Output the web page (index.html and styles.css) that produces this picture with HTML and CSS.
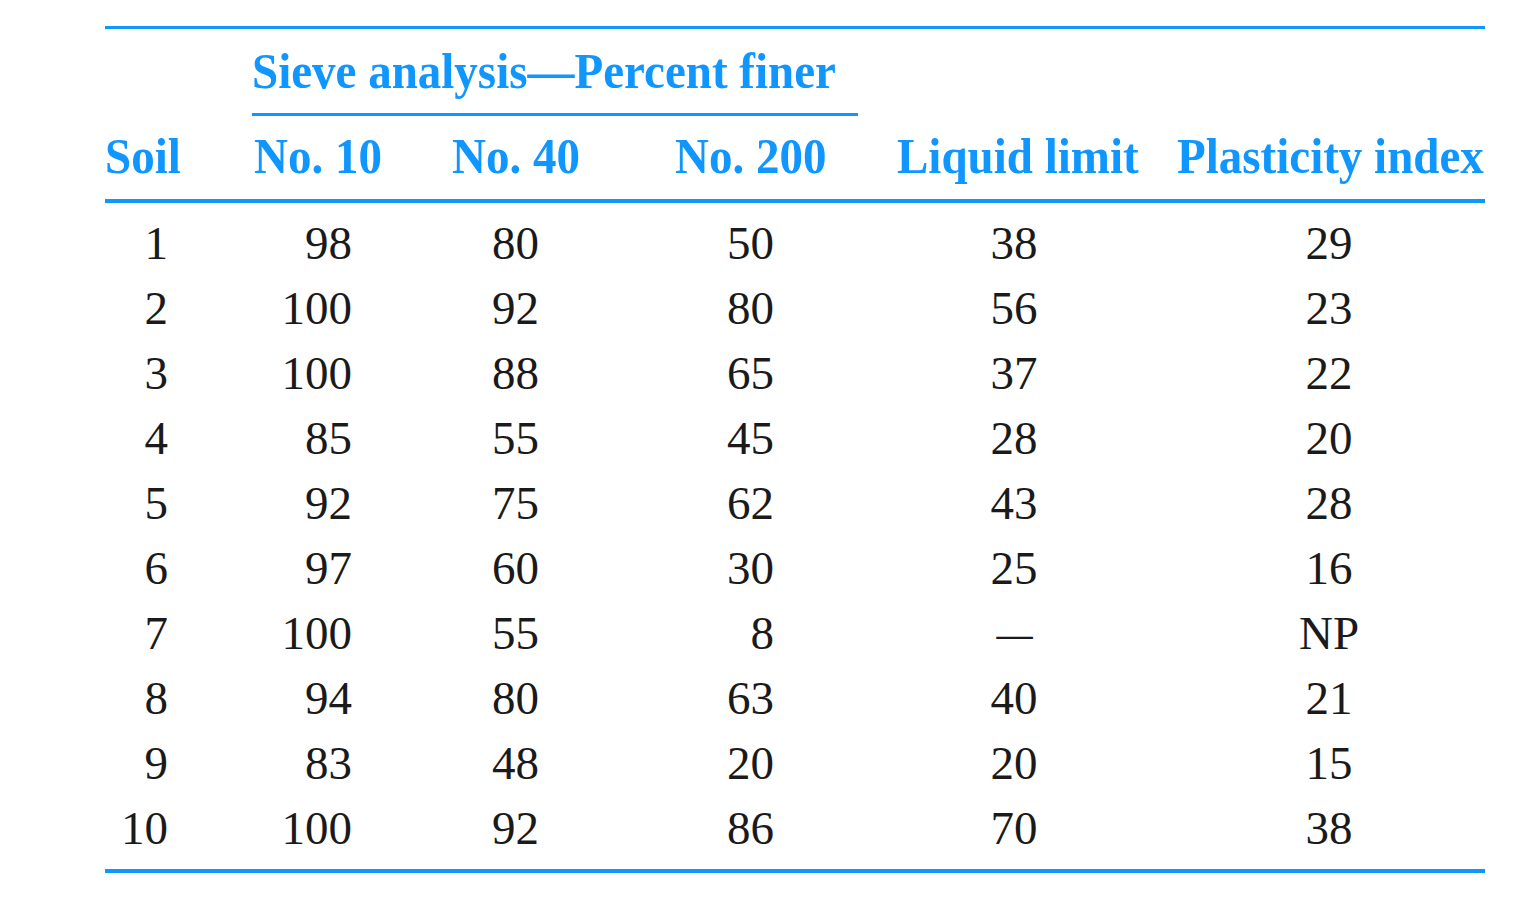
FILE: index.html
```html
<!DOCTYPE html>
<html lang="en">
<head>
<meta charset="utf-8">
<title>Soil data</title>
<link rel="stylesheet" href="styles.css">
</head>
<body>
<div class="tbl">
  <div class="row group-row">
    <div class="group-cell"><span class="hd">Sieve analysis—Percent finer</span></div>
  </div>
  <div class="row head-row">
    <div class="h c1"><span class="hd">Soil</span></div>
    <div class="h c2"><span class="hd">No. 10</span></div>
    <div class="h c3"><span class="hd">No. 40</span></div>
    <div class="h c4"><span class="hd">No. 200</span></div>
    <div class="h c5"><span class="hd">Liquid limit</span></div>
    <div class="h c6"><span class="hd">Plasticity index</span></div>
  </div>
  <div class="body">
    <div class="row drow"><div class="d c1">1</div><div class="d c2">98</div><div class="d c3">80</div><div class="d c4">50</div><div class="d c5">38</div><div class="d c6">29</div></div>
    <div class="row drow"><div class="d c1">2</div><div class="d c2">100</div><div class="d c3">92</div><div class="d c4">80</div><div class="d c5">56</div><div class="d c6">23</div></div>
    <div class="row drow"><div class="d c1">3</div><div class="d c2">100</div><div class="d c3">88</div><div class="d c4">65</div><div class="d c5">37</div><div class="d c6">22</div></div>
    <div class="row drow"><div class="d c1">4</div><div class="d c2">85</div><div class="d c3">55</div><div class="d c4">45</div><div class="d c5">28</div><div class="d c6">20</div></div>
    <div class="row drow"><div class="d c1">5</div><div class="d c2">92</div><div class="d c3">75</div><div class="d c4">62</div><div class="d c5">43</div><div class="d c6">28</div></div>
    <div class="row drow"><div class="d c1">6</div><div class="d c2">97</div><div class="d c3">60</div><div class="d c4">30</div><div class="d c5">25</div><div class="d c6">16</div></div>
    <div class="row drow"><div class="d c1">7</div><div class="d c2">100</div><div class="d c3">55</div><div class="d c4">8</div><div class="d c5"><span class="dash">—</span></div><div class="d c6">NP</div></div>
    <div class="row drow"><div class="d c1">8</div><div class="d c2">94</div><div class="d c3">80</div><div class="d c4">63</div><div class="d c5">40</div><div class="d c6">21</div></div>
    <div class="row drow"><div class="d c1">9</div><div class="d c2">83</div><div class="d c3">48</div><div class="d c4">20</div><div class="d c5">20</div><div class="d c6">15</div></div>
    <div class="row drow"><div class="d c1">10</div><div class="d c2">100</div><div class="d c3">92</div><div class="d c4">86</div><div class="d c5">70</div><div class="d c6">38</div></div>
  </div>
</div>
</body>
</html>
```

FILE: styles.css
```css
html, body {
  margin: 0;
  padding: 0;
  background: #ffffff;
}

body {
  font-family: "Liberation Serif", "Times New Roman", serif;
  font-size: 47px;
  line-height: 47px;
  color: #1a1a1a;
}

.tbl {
  margin: 26px 0 0 105px;
  width: 1380px;
  border-top: 3px solid #1096ff;
  border-bottom: 4px solid #1096ff;
}

.row {
  display: grid;
  grid-template-columns: 145px 190px 200px 240px 280px 325px;
}

.hd {
  display: inline-block;
  font-weight: bold;
  color: #1096ff;
  white-space: nowrap;
  transform: scaleY(1.08);
  transform-origin: 50% 84%;
}

.group-row {
  padding-top: 20px;
}

.group-cell {
  grid-column: 2 / 5;
  margin-left: 2px;
  margin-right: 22px;
  padding-bottom: 17px;
  border-bottom: 3px solid #1096ff;
}

.head-row {
  padding-top: 18px;
  padding-bottom: 18px;
  border-bottom: 4px solid #1096ff;
}

.h.c1 { padding-left: 0; }
.h.c2 { padding-left: 4px; }
.h.c3 { padding-left: 12px; }
.h.c4 { padding-left: 35px; }
.h.c5 { padding-left: 17px; }
.h.c6 { padding-left: 17px; }

.body {
  padding-top: 8px;
  padding-bottom: 8px;
}

.drow {
  line-height: 65px;
}

.d.c1 { text-align: right; padding-right: 82px; }
.d.c2 { text-align: right; padding-right: 88px; }
.d.c3 { text-align: right; padding-right: 101px; }
.d.c4 { text-align: right; padding-right: 106px; }
.d.c5 { text-align: center; padding-right: 12px; }
.d.c6 { text-align: center; padding-left: 13px; }

.dash {
  display: inline-block;
  transform: scaleX(0.77);
}
```
